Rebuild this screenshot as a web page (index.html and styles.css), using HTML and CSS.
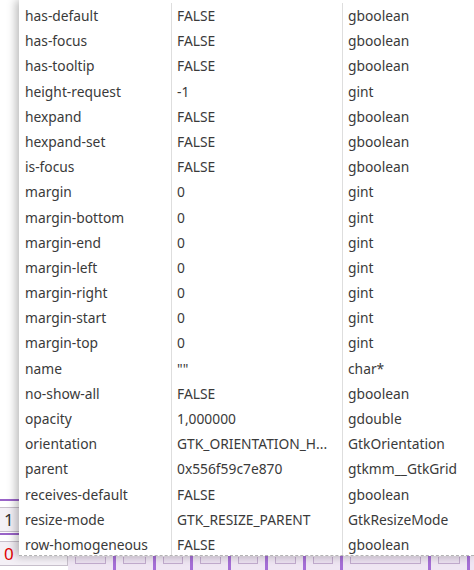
FILE: index.html
```html
<!DOCTYPE html>
<html lang="en">
<head>
    <meta charset="UTF-8">
    <title>Properties</title>
    <link rel="stylesheet" href="styles.css">
</head>
<body>
    <div class="window">
        <div class="side">
            <div class="side-line"></div>
            <div class="side-box">1</div>
            <div class="side-line"></div>
            <div class="side-box red">0</div>
        </div>
        <div class="toolbar">
            <div class="cell" style="width: 48px"><span class="tb-box"></span></div>
            <div class="cell" style="width: 40px"><span class="tb-box"></span></div>
            <div class="cell" style="width: 37px"><span class="tb-box"></span></div>
            <div class="cell" style="width: 38px"><span class="tb-box"></span></div>
            <div class="cell" style="width: 37px"><span class="tb-box"></span></div>
            <div class="cell" style="width: 38px"><span class="tb-box"></span></div>
            <div class="cell" style="width: 37px"><span class="tb-box"></span></div>
            <div class="cell" style="width: 88px"><span class="tb-box"></span></div>
            <div class="cell" style="width: 39px"><span class="tb-box"></span></div>
        </div>
    </div>

    <div class="popup">
        <div class="props">
            <div class="row"><span>has-default</span><span>FALSE</span><span>gboolean</span></div>
            <div class="row"><span>has-focus</span><span>FALSE</span><span>gboolean</span></div>
            <div class="row"><span>has-tooltip</span><span>FALSE</span><span>gboolean</span></div>
            <div class="row"><span>height-request</span><span>-1</span><span>gint</span></div>
            <div class="row"><span>hexpand</span><span>FALSE</span><span>gboolean</span></div>
            <div class="row"><span>hexpand-set</span><span>FALSE</span><span>gboolean</span></div>
            <div class="row"><span>is-focus</span><span>FALSE</span><span>gboolean</span></div>
            <div class="row"><span>margin</span><span>0</span><span>gint</span></div>
            <div class="row"><span>margin-bottom</span><span>0</span><span>gint</span></div>
            <div class="row"><span>margin-end</span><span>0</span><span>gint</span></div>
            <div class="row"><span>margin-left</span><span>0</span><span>gint</span></div>
            <div class="row"><span>margin-right</span><span>0</span><span>gint</span></div>
            <div class="row"><span>margin-start</span><span>0</span><span>gint</span></div>
            <div class="row"><span>margin-top</span><span>0</span><span>gint</span></div>
            <div class="row"><span>name</span><span>""</span><span>char*</span></div>
            <div class="row"><span>no-show-all</span><span>FALSE</span><span>gboolean</span></div>
            <div class="row"><span>opacity</span><span>1,000000</span><span>gdouble</span></div>
            <div class="row"><span>orientation</span><span>GTK_ORIENTATION_H...</span><span>GtkOrientation</span></div>
            <div class="row"><span>parent</span><span>0x556f59c7e870</span><span>gtkmm__GtkGrid</span></div>
            <div class="row"><span>receives-default</span><span>FALSE</span><span>gboolean</span></div>
            <div class="row"><span>resize-mode</span><span>GTK_RESIZE_PARENT</span><span>GtkResizeMode</span></div>
            <div class="row"><span>row-homogeneous</span><span>FALSE</span><span>gboolean</span></div>
        </div>
    </div>
</body>
</html>
```

FILE: styles.css
```css
* {
    box-sizing: border-box;
}

body {
    margin: 0;
    padding: 0;
    width: 474px;
    height: 570px;
    overflow: hidden;
    background-color: #ffffff;
    font-family: "Noto Sans", sans-serif;
    position: relative;
}

.window {
    height: 570px;
    display: flex;
    align-items: flex-end;
}

.side {
    width: 68px;
    flex: none;
    display: flex;
    flex-direction: column;
}

.side-line {
    width: 20px;
    height: 2px;
    background-color: #9a64c8;
    margin-bottom: 6px;
}

.side-box {
    height: 25px;
    border: 1px solid #c8c0cc;
    border-left: none;
    background-color: #f4f0f6;
    font-size: 17px;
    line-height: 23px;
    padding-left: 4px;
    color: #333;
    margin-bottom: 1px;
}

.side-box.red {
    color: #e00000;
    margin-bottom: 4px;
}

.toolbar {
    height: 14px;
    flex: 1;
    display: flex;
    overflow: hidden;
    background-color: #efe6f3;
}

.cell {
    flex: none;
    height: 14px;
    border-right: 3px solid #a56fd6;
    display: flex;
    padding: 0 7px;
}

.tb-box {
    flex: 1;
    height: 7px;
    margin-top: 1px;
    border: 1px solid #c2acce;
    border-top: none;
    background-color: #ebe0f0;
}

.popup {
    position: absolute;
    top: 0;
    left: 19px;
    width: 455px;
    height: 556px;
    background-color: #ffffff;
    border-bottom: 1px dashed #b4b4b4;
    box-shadow: -3px 0 9px rgba(0, 0, 0, 0.28);
    overflow: hidden;
}

.props {
    padding-top: 3px;
}

.row {
    display: grid;
    grid-template-columns: 152px 171px 1fr;
    height: 25.2px;
    font-size: 13.8px;
    color: #3a3a3a;
}

.row span {
    padding-left: 6px;
    line-height: 25.2px;
    white-space: nowrap;
}

.row span + span {
    border-left: 1px solid #dedede;
    padding-left: 5px;
}
```
